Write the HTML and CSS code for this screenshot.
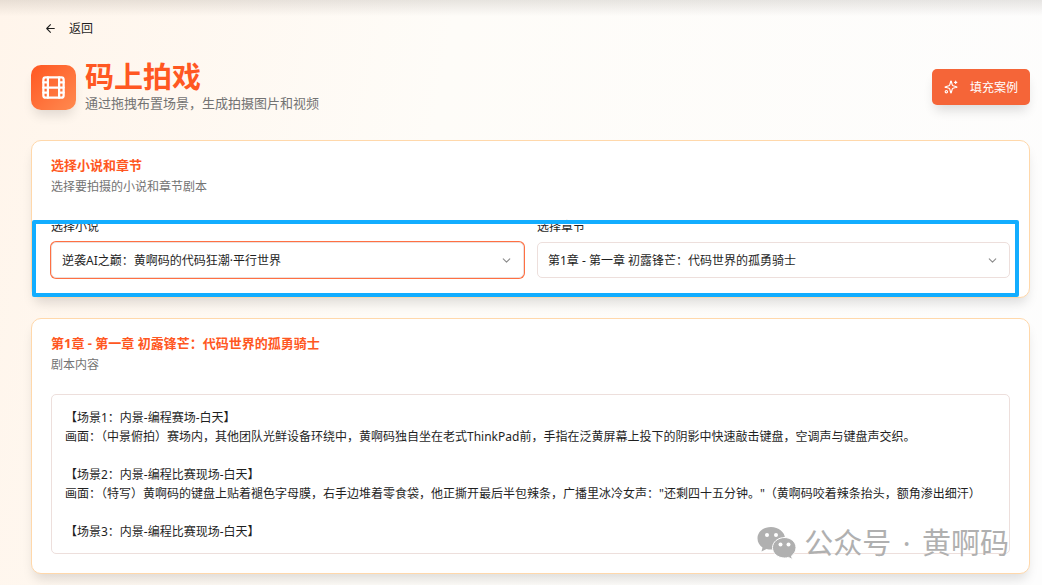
FILE: index.html
```html
<!DOCTYPE html>
<html lang="zh-CN">
<head>
    <meta charset="UTF-8">
    <title>码上拍戏</title>
    <link rel="stylesheet" href="styles.css">
</head>
<body>
<div class="page">
    <button class="back" type="button">
        <svg width="13" height="13" viewBox="0 0 24 24"><path d="M12 19l-7-7 7-7M19 12H5"/></svg>
        返回
    </button>
    <header class="header">
        <div class="logo">
            <svg width="27" height="27" viewBox="0 0 24 24">
                <rect x="3" y="3" width="18" height="18" rx="2"/>
                <path d="M7 3v18M17 3v18M3 7.5h4M3 12h18M3 16.5h4M17 7.5h4M17 16.5h4"/>
            </svg>
        </div>
        <div class="heading">
            <h1>码上拍戏</h1>
            <p>通过拖拽布置场景，生成拍摄图片和视频</p>
        </div>
        <button class="fill" type="button">
            <svg width="14" height="14" viewBox="0 0 24 24">
                <path d="M9.9 15.5A2 2 0 0 0 8.5 14.1l-6.1-1.6a.5.5 0 0 1 0-1l6.1-1.6A2 2 0 0 0 9.9 8.5l1.6-6.1a.5.5 0 0 1 1 0l1.6 6.1a2 2 0 0 0 1.4 1.4l6.1 1.6a.5.5 0 0 1 0 1l-6.1 1.6a2 2 0 0 0-1.4 1.4l-1.6 6.1a.5.5 0 0 1-1 0z"/>
                <path d="M20 2v4M22 4h-4"/>
                <circle cx="4" cy="20" r="2"/>
            </svg>
            填充案例
        </button>
    </header>

    <main class="cards">
        <section class="card">
            <h2>选择小说和章节</h2>
            <p class="desc">选择要拍摄的小说和章节剧本</p>
            <div class="fields">
                <div class="field">
                    <label for="novel">选择小说</label>
                    <div class="select active">
                        <select id="novel">
                            <option>逆袭AI之巅：黄啊码的代码狂潮·平行世界</option>
                        </select>
                        <svg width="13" height="13" viewBox="0 0 24 24"><path d="M6 9l6 6 6-6"/></svg>
                    </div>
                </div>
                <div class="field">
                    <label for="chapter">选择章节</label>
                    <div class="select">
                        <select id="chapter">
                            <option>第1章 - 第一章 初露锋芒：代码世界的孤勇骑士</option>
                        </select>
                        <svg width="13" height="13" viewBox="0 0 24 24"><path d="M6 9l6 6 6-6"/></svg>
                    </div>
                </div>
            </div>
            <div class="marker"></div>
        </section>

        <section class="card">
            <h2>第1章 - 第一章 初露锋芒：代码世界的孤勇骑士</h2>
            <p class="desc">剧本内容</p>
            <div class="script">【场景1：内景-编程赛场-白天】
画面：（中景俯拍）赛场内，其他团队光鲜设备环绕中，黄啊码独自坐在老式ThinkPad前，手指在泛黄屏幕上投下的阴影中快速敲击键盘，空调声与键盘声交织。

【场景2：内景-编程比赛现场-白天】
画面：（特写）黄啊码的键盘上贴着褪色字母膜，右手边堆着零食袋，他正撕开最后半包辣条，广播里冰冷女声："还剩四十五分钟。"（黄啊码咬着辣条抬头，额角渗出细汗）

【场景3：内景-编程比赛现场-白天】</div>
            <div class="watermark">
                <svg width="40" height="34" viewBox="0 0 40 34">
                    <path d="M14 1C6.300 1 .5 6 .5 12.500c0 3.700 1.900 6.800 5 9L4.500 25.500l5-2.500c1.500.4 3 .6 4.500.6C21.600 23.600 28 18.700 28 12.500S21.600 1 14 1z"/>
                    <path class="front" d="M27.500 11.500c-6.600 0-12 4.500-12 10.200s5.400 10.300 12 10.300c1.400 0 2.800-.2 4-.6l4 2.100-1-3.600c2.700-2 4.500-4.900 4.500-8.200 0-5.700-5-10.200-11.500-10.200z"/>
                    <g class="eyes">
                        <circle cx="10" cy="9" r="2"/>
                        <circle cx="19" cy="9" r="2"/>
                        <circle cx="23.500" cy="18.500" r="2"/>
                        <circle cx="31.500" cy="18.500" r="2"/>
                    </g>
                </svg>
                <span>公众号 <span class="dot">·</span> 黄啊码</span>
            </div>
        </section>
    </main>
</div>
</body>
</html>
```
FILE: styles.css
```css
*{
    box-sizing: border-box;
}
body{
    margin: 0;
    min-height: 100vh;
    font-family: "Noto Sans","Noto Sans CJK SC",sans-serif;
    font-size: 12px;
    color: #1f1f1f;
    background: linear-gradient(to bottom, rgba(90,80,70,0.14), rgba(90,80,70,0) 16px), linear-gradient(100deg, #fff5eb, #fefcf8 40%, #fdfdfd);
}
h1,h2,p{
    margin: 0;
}
button,select{
    font: inherit;
    color: inherit;
}
svg{
    fill: none;
    stroke: currentColor;
    stroke-width: 2;
    stroke-linecap: round;
    stroke-linejoin: round;
}
.page{
    padding: 14px 12px 11px 31px;
}
.back{
    display: flex;
    align-items: center;
    gap: 12px;
    height: 28px;
    padding: 0 13px;
    border: 0;
    background: none;
}
.header{
    display: flex;
    align-items: center;
    gap: 9px;
    margin: 19px 0 27px;
}
.logo{
    display: flex;
    align-items: center;
    justify-content: center;
    width: 45px;
    height: 45px;
    border-radius: 10px;
    color: white;
    background: linear-gradient(to bottom right, #ff5722, #ff8a50);
    box-shadow: 0 8px 12px -3px rgba(0,0,0,0.12);
}
.heading{
    flex: 1;
}
.heading h1{
    font-size: 29px;
    line-height: 32px;
    color: #ff5722;
}
.heading p{
    font-size: 13px;
    line-height: 20px;
    color: #737373;
}
.fill{
    display: flex;
    align-items: center;
    gap: 12px;
    height: 36px;
    padding: 0 12px;
    border: 0;
    border-radius: 5px;
    color: white;
    background: #f56538;
    box-shadow: 0 8px 12px -3px rgba(0,0,0,0.14);
}
.cards{
    display: grid;
    gap: 20px;
}
.card{
    position: relative;
    min-width: 0;
    padding: 14px 19px 19px;
    border: 1px solid #ffd8ab;
    border-radius: 10px;
    background: white;
    box-shadow: 0 8px 12px -3px rgba(0,0,0,0.13);
}
.card h2{
    font-size: 13px;
    line-height: 21px;
    color: #ff5722;
}
.desc{
    margin-bottom: 18px;
    line-height: 22px;
    color: #737373;
}
.fields{
    display: grid;
    grid-template-columns: 1fr 1fr;
    gap: 13px;
}
.field label{
    display: block;
    margin-bottom: 5px;
    line-height: 21px;
}
.select{
    position: relative;
}
.select select{
    display: block;
    appearance: none;
    width: 100%;
    height: 36px;
    padding: 0 30px 0 10px;
    border: 1px solid #eddfdc;
    border-radius: 5px;
    background: white;
}
.active select{
    box-shadow: 0 0 0 1px #ff7043;
}
.select svg{
    position: absolute;
    top: 12px;
    right: 11px;
    color: #8c8c8c;
    pointer-events: none;
}
/* highlight frame over the two selects */
.marker{
    position: absolute;
    top: 79px;
    right: 10px;
    bottom: 0;
    left: 0;
    border: 4px solid #12adff;
    border-radius: 2px;
    pointer-events: none;
}
.script{
    padding: 13px 13px 12px;
    border: 1px solid #eddfdc;
    border-radius: 5px;
    line-height: 19px;
    white-space: pre-wrap;
}
.watermark{
    position: absolute;
    right: 20px;
    bottom: 10px;
    display: flex;
    align-items: center;
    gap: 7px;
    font-size: 29px;
    line-height: 40px;
    color: #b0b0b0;
}
.watermark svg{
    fill: currentColor;
    stroke: none;
}
.watermark .front{
    stroke: white;
    stroke-width: 1;
}
.watermark .eyes{
    fill: white;
}
.watermark .dot{
    margin: 0 4px;
}
```
